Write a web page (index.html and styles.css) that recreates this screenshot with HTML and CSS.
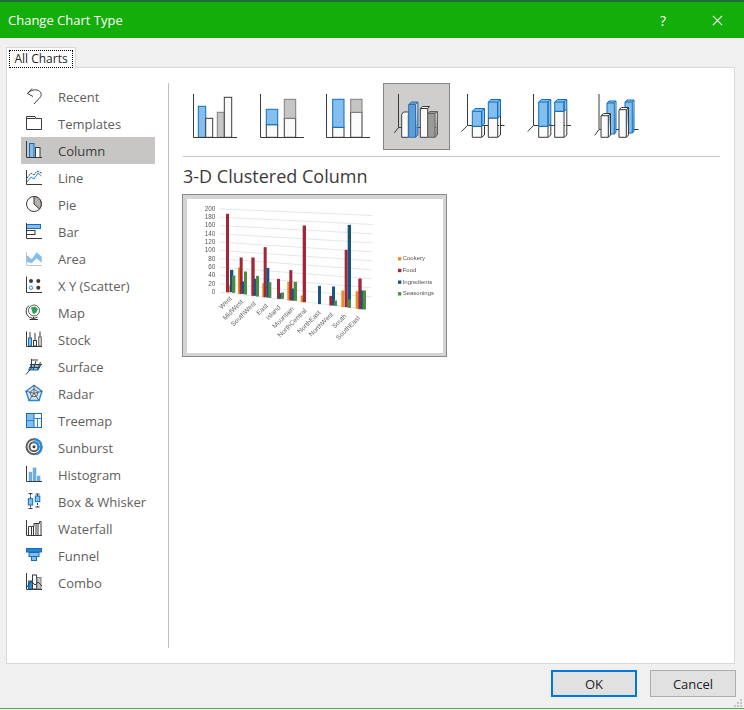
FILE: index.html
```html
<!DOCTYPE html>
<html lang="en">
<head>
<meta charset="utf-8">
<title>Change Chart Type</title>
<link rel="stylesheet" href="styles.css">
</head>
<body>
<header class="titlebar">
  <h1 class="title">Change Chart Type</h1>
  <div class="winbtns">
    <span class="help">?</span>
    <svg class="close" viewBox="0 0 12 12"><path d="M1 1L11 11M11 1L1 11"/></svg>
  </div>
</header>
<main class="main">
  <div class="tabs"><div class="tab"><span class="tablabel">All Charts</span></div></div>
  <section class="panel">
    <nav class="side">
      <div class="item"><svg class="ic" viewBox="0 0 20 21"><path class="ln" d="M7 2.500L2.500 7.500L8 10.500M2.500 7.500C6 4 10 3 13.500 4.500C17 6.500 17 10 14 12.500L9 18"/></svg><span>Recent</span></div>
      <div class="item"><svg class="ic" viewBox="0 0 20 21"><path class="ln" d="M1.500 16.500V3.500H10L11 5.500H16.500V16.500Z"/><path class="ln" d="M1.500 5.500H10.500"/></svg><span>Templates</span></div>
      <div class="item sel"><svg class="ic" viewBox="0 0 20 21"><rect class="b" x="4.500" y="3.500" width="4.500" height="14"/><rect class="w" x="10.500" y="7.500" width="4.500" height="10"/><path class="ln" d="M1.500 1V17.500H17"/></svg><span>Column</span></div>
      <div class="item"><svg class="ic" viewBox="0 0 20 21"><path class="bl" d="M2 15L6 10L9 12L13 6L16.500 9"/><path class="ln dash" d="M2 11L6 6L9 8L12 4L16.500 6"/><path class="ln" d="M1.500 3V17.500H17"/></svg><span>Line</span></div>
      <div class="item"><svg class="ic" viewBox="0 0 20 21"><circle class="w" cx="9" cy="10" r="7.500"/><path class="g2" d="M9 2.500A7.500 7.500 0 0 1 14.500 15L9 10Z"/></svg><span>Pie</span></div>
      <div class="item"><svg class="ic" viewBox="0 0 20 21"><rect class="b" x="1.500" y="3.500" width="14" height="4"/><rect class="w" x="1.500" y="9.500" width="8.500" height="4"/><path class="ln" d="M1.500 2V17.500H17"/></svg><span>Bar</span></div>
      <div class="item"><svg class="ic" viewBox="0 0 20 21"><path class="lg" d="M1.500 4V17.500H17"/><path class="af" d="M1.700 7L6.700 11.300L11.700 4.300L16.700 8.700V14.700L11.700 10.300L6.700 15.300L1.700 13.700Z"/></svg><span>Area</span></div>
      <div class="item"><svg class="ic" viewBox="0 0 20 21"><path class="ln" d="M1.500 1.500V17.500H17"/><circle class="dk" cx="6" cy="6" r="2"/><circle class="dk" cx="13.300" cy="6" r="2"/><circle class="dk" cx="13.300" cy="12.700" r="2"/><circle class="bl" cx="6" cy="12.700" r="1.700"/></svg><span>X Y (Scatter)</span></div>
      <div class="item"><svg class="ic" viewBox="0 0 20 21"><circle class="ring thinr" cx="9" cy="8.500" r="5.500"/><path class="gr" d="M6 5.500L10 4.500L13 7L11 11L8 12L7 9Z"/><path class="ln" d="M4 3.500A7 7 0 0 0 12.500 15M8.500 15V17.500M4.500 17.500H13"/></svg><span>Map</span></div>
      <div class="item"><svg class="ic" viewBox="0 0 20 21"><rect class="b" x="3.500" y="9" width="3" height="8"/><rect class="w" x="8.500" y="11.500" width="3" height="5.500"/><rect class="g" x="13.500" y="8" width="3" height="9"/><path class="ln" d="M5 3V9M10 4V11.500M15 2.500V8M1.500 2.500V17.500H17"/></svg><span>Stock</span></div>
      <div class="item"><svg class="ic" viewBox="0 0 20 21"><path class="b" d="M3.500 14L6.500 8.500H16L13 14Z"/><path class="ln" d="M6.500 3V12L1 18.500M5 8.500H17M4.500 11.500H15M8 14L11 5M12.500 14L15.500 6M6.500 4H13"/></svg><span>Surface</span></div>
      <div class="item"><svg class="ic" viewBox="0 0 20 21"><path class="bt" d="M9 2.300L17 8.200L14 17.500H4L1 8.200Z"/><path class="ln thin" d="M9 2.300V10.300M1 8.200L9 10.300L17 8.200M4 17.500L9 10.300L14 17.500M9 6L13 9L11.500 13.500H6.500L5 9Z"/></svg><span>Radar</span></div>
      <div class="item"><svg class="ic" viewBox="0 0 20 21"><rect class="w2" x="1.500" y="3.500" width="15" height="14"/><rect class="b" x="1.500" y="3.500" width="7.500" height="14"/><path class="bl" d="M1.500 10.500H9M9 8.500H16.500M12.500 8.500V17.500"/></svg><span>Treemap</span></div>
      <div class="item"><svg class="ic" viewBox="0 0 20 21"><circle class="ring" cx="9" cy="9.700" r="7.500"/><path class="arc" d="M9 2.200A7.500 7.500 0 0 1 16.500 9.700A7.500 7.500 0 0 1 11 17"/><circle class="ring" cx="9" cy="9.700" r="4.500"/><path class="arc" d="M9 5.200A4.500 4.500 0 0 1 13 12"/><circle class="dk" cx="9" cy="9.700" r="1.500"/></svg><span>Sunburst</span></div>
      <div class="item"><svg class="ic" viewBox="0 0 20 21"><rect class="b2" x="3.500" y="7.700" width="4" height="9.800"/><rect class="b2" x="7.500" y="3.300" width="4.200" height="14.200"/><rect class="b2" x="11.700" y="11.300" width="4" height="6.200"/><path class="ln" d="M1.500 2V17.500H17"/></svg><span>Histogram</span></div>
      <div class="item"><svg class="ic" viewBox="0 0 20 21"><path class="ln dash" d="M5.500 2.500V17.500M12.500 3V16"/><path class="ln" d="M3.500 2.500H7.500M3.500 17.500H7.500M10.500 3H14.500M10.500 16H14.500"/><rect class="b" x="3.300" y="7.700" width="4.400" height="6.300"/><rect class="b" x="10.300" y="5" width="4.500" height="5.700"/></svg><span>Box &amp; Whisker</span></div>
      <div class="item"><svg class="ic" viewBox="0 0 20 21"><path class="wf" d="M3.500 17.500V8.500H6.500V17.500M6.500 8.500H9V5.500H11V17.500M8.500 17.500V8.500M11 5.500H14.500V3.500H16V17.500M13 17.500V5.500"/><path class="ln" d="M1.500 2V17.500H17"/></svg><span>Waterfall</span></div>
      <div class="item"><svg class="ic" viewBox="0 0 20 21"><rect class="bs" x="1.500" y="3.500" width="15" height="3.500"/><rect class="b" x="4" y="7.500" width="10" height="4"/><rect class="b" x="6.500" y="11.500" width="5" height="4"/></svg><span>Funnel</span></div>
      <div class="item"><svg class="ic" viewBox="0 0 20 21"><rect class="bs" x="3.500" y="9" width="4" height="8"/><rect class="w" x="7.500" y="3" width="4" height="14"/><rect class="g" x="12" y="5.500" width="4" height="11.500"/><path class="ln" d="M1.500 1V17.500H17M2 15L6 9L10 13L13 10L17 14"/></svg><span>Combo</span></div>
    </nav>
    <div class="content">
      <div class="types">
        <div class="type"><svg class="tsvg" viewBox="0 0 67 67"><rect class="b" x="15.300" y="23.300" width="7.400" height="31"/><rect class="w" x="22.700" y="35.300" width="7" height="19"/><rect class="g" x="34.300" y="29.300" width="7" height="25"/><rect class="w" x="41.300" y="14.300" width="7.400" height="40"/><path class="ax" d="M10.500 11V54.500H54"/></svg></div>
        <div class="type"><svg class="tsvg" viewBox="0 0 67 67"><rect class="w" x="16.300" y="41.700" width="11.400" height="12.600"/><rect class="b" x="16.300" y="26.300" width="11.400" height="15.400"/><rect class="w" x="34.300" y="35.300" width="11.400" height="19"/><rect class="g" x="34.300" y="16.300" width="11.400" height="19"/><path class="ax" d="M10.500 11V54.500H54"/></svg></div>
        <div class="type"><svg class="tsvg" viewBox="0 0 67 67"><rect class="w" x="16.700" y="44.300" width="11.300" height="10"/><rect class="b" x="16.700" y="16.300" width="11.300" height="28"/><rect class="w" x="34.700" y="29.300" width="11.300" height="25"/><rect class="g" x="34.700" y="16.300" width="11.300" height="13"/><path class="ax" d="M10.500 11V54.500H54"/></svg></div>
        <div class="type on"><svg class="tsvg" viewBox="0 0 67 67"><path class="ax" d="M15.500 11V44.500L11.300 50M15.500 44.500H55"/>
          <path class="w" d="M18.700 31.500V54.300H25.300V31.500L27 29H20.500Z"/>
          <path class="bd" d="M25.700 21.500V54.300H32.500V21.500L35 19H28.500ZM32.500 21.500H25.700M32.500 54.300L35 52V19"/>
          <path class="w" d="M37.300 25.500V54.300H44.700V25.500L46.500 23.500H39.500ZM37.300 25.500H44.700"/>
          <path class="dg" d="M44.700 30.500V54.300H52V30.500L54.500 28.500H47ZM52 30.500H44.700M52 54.300L54.500 52V28.500"/></svg></div>
        <div class="type"><svg class="tsvg" viewBox="0 0 67 67"><path class="ax" d="M17.500 11V42.500L11.300 48.500M17.500 42.500H54.500"/>
          <path class="w" d="M22.300 43.300V54.300H31.700V43.300ZM31.700 54.300L34.500 52V43"/>
          <path class="b" d="M22.300 28.300V43.300H31.700V28.300L34.500 25.500H25ZM22.300 28.300H31.700V43.300L34.500 41V25.500"/>
          <path class="w" d="M38.300 35V54.300H47.700V35ZM47.700 54.300L50.500 52V33"/>
          <path class="b" d="M38.300 19V35H47.700V19L50.500 16.500H41ZM38.300 19H47.700V35L50.500 33V16.500"/></svg></div>
        <div class="type"><svg class="tsvg" viewBox="0 0 67 67"><path class="ax" d="M17.500 11V42.500L11.700 48.500M17.500 42.500H55"/>
          <path class="w" d="M22.700 43.300V54.300H32V43.300ZM32 54.300L34.800 52V41"/>
          <path class="b" d="M22.700 19V43.300H32V19L34.800 16.500H25.500ZM22.700 19H32V43.300L34.800 41V16.500"/>
          <path class="w" d="M38.700 28.300V54.300H48V28.300ZM48 54.300L50.800 52V26"/>
          <path class="b" d="M38.700 19V28.300H48V19L50.800 16.500H41.500ZM38.700 19H48V28.300L50.800 26V16.500"/></svg></div>
        <div class="type"><svg class="tsvg" viewBox="0 0 67 67"><path class="ax" d="M16 11V46.500L11.700 52.300M16 46.500H55.500"/>
          <path class="b" d="M24 20V51H31.300V20L33 18H26ZM24 20H31.300M31.300 51L33 49.500V18"/>
          <path class="b" d="M42 19V50H49.300V19L51 17H44ZM42 19H49.300M49.300 50L51 48.500V17"/>
          <path class="w" d="M18 32.700V54.300H25.300V32.700L27.500 30.500H20.500ZM18 32.700H25.300M25.300 54.300L27.500 52V30.500"/>
          <path class="w" d="M36 26.700V54.300H43.300V26.700L45.500 24.500H38.500ZM36 26.700H43.300M43.300 54.300L45.500 52V24.500"/></svg></div>
      </div>
      <h2 class="heading">3-D Clustered Column</h2>
      <div class="thumb">
        <svg class="chart" viewBox="2 -13 768 459">
          <g class="grid">
            <path d="M101 15L559 35M101 40L559 62M101 65L558 90M101 90L558 117M101 115L557 144M101 140L557 171M101 165L556 198M101 190L556 225M101 215L555 252M101 240L555 279M101 265L536 315"/>
          </g>
          <g class="ylab">
            <text x="87" y="21">200</text><text x="87" y="46">180</text><text x="87" y="71">160</text><text x="87" y="96">140</text><text x="87" y="121">120</text><text x="87" y="146">100</text><text x="87" y="171">80</text><text x="87" y="196">60</text><text x="87" y="221">40</text><text x="87" y="246">20</text><text x="87" y="271">0</text>
          </g>
          <g class="o"><rect x="122" y="245" width="9" height="21"/><rect x="155" y="191" width="9" height="79"/><rect x="228" y="238" width="9" height="42"/><rect x="303" y="234" width="9" height="55"/><rect x="343" y="275" width="9" height="20"/><rect x="465" y="260" width="9" height="50"/><rect x="508" y="262" width="9" height="53"/></g>
          <g class="r"><rect x="119" y="30" width="9" height="235"/><rect x="160" y="161" width="9" height="109"/><rect x="195" y="161" width="10" height="115"/><rect x="232" y="130" width="9" height="150"/><rect x="272" y="225" width="9" height="60"/><rect x="309" y="199" width="9" height="91"/><rect x="349" y="65" width="10" height="230"/><rect x="429" y="276" width="9" height="29"/><rect x="475" y="138" width="9" height="172"/><rect x="516" y="224" width="10" height="92"/></g>
          <g class="u"><rect x="131" y="198" width="10" height="67"/><rect x="166" y="233" width="9" height="37"/><rect x="203" y="225" width="8" height="51"/><rect x="240" y="192" width="9" height="89"/><rect x="278" y="268" width="8" height="17"/><rect x="316" y="254" width="8" height="36"/><rect x="395" y="246" width="9" height="55"/><rect x="437" y="248" width="9" height="57"/><rect x="484" y="63" width="10" height="248"/><rect x="523" y="260" width="8" height="56"/></g>
          <g class="e"><rect x="137" y="215" width="10" height="52"/><rect x="173" y="203" width="9" height="69"/><rect x="209" y="216" width="9" height="62"/><rect x="246" y="235" width="9" height="47"/><rect x="284" y="266" width="9" height="19"/><rect x="322" y="234" width="10" height="57"/><rect x="443" y="290" width="9" height="16"/><rect x="484" y="287" width="10" height="24"/><rect x="529" y="260" width="10" height="57"/></g>
          <g class="xlab">
            <text transform="translate(138 285) rotate(-45)">West</text>
            <text transform="translate(172 295) rotate(-45)">MidWest</text>
            <text transform="translate(210 300) rotate(-45)">SouthWest</text>
            <text transform="translate(246 307) rotate(-45)">East</text>
            <text transform="translate(284 312) rotate(-45)">Island</text>
            <text transform="translate(324 317) rotate(-45)">Mountain</text>
            <text transform="translate(362 322) rotate(-45)">NorthCentral</text>
            <text transform="translate(404 328) rotate(-45)">NorthEast</text>
            <text transform="translate(442 333) rotate(-45)">NorthWest</text>
            <text transform="translate(482 338) rotate(-45)">South</text>
            <text transform="translate(522 344) rotate(-45)">SouthEast</text>
          </g>
          <g class="legend">
            <rect class="ok" x="635" y="160" width="10" height="10"/><text x="649" y="170">Cookery</text>
            <rect class="rk" x="635" y="195" width="10" height="10"/><text x="649" y="205">Food</text>
            <rect class="uk" x="635" y="230" width="10" height="10"/><text x="649" y="240">Ingredients</text>
            <rect class="ek" x="635" y="265" width="10" height="10"/><text x="649" y="275">Seasonings</text>
          </g>
        </svg>
      </div>
    </div>
  </section>
</main>
<footer class="footer">
  <button class="btn primary">OK</button>
  <button class="btn">Cancel</button>
  <svg class="grip" viewBox="0 0 10 8"><path d="M7 0h2v2H7zM4 3h2v2H4zM7 3h2v2H7zM1 6h2v2H1zM4 6h2v2H4zM7 6h2v2H7z"/></svg>
</footer>
<div class="edge"></div>
</body>
</html>
```
FILE: styles.css
```css
* { box-sizing: border-box; }
html, body { margin: 0; padding: 0; width: 744px; height: 710px; overflow: hidden; }
body { display: flex; flex-direction: column; background: #f0f0f0; font-family: "Open Sans", "Noto Sans", sans-serif; color: #605e5c; position: relative; }

.titlebar { height: 38px; flex: none; background: #13ae0a; border-top: 2px solid #1d6b3c; display: flex; align-items: center; justify-content: space-between; padding: 0 21px 0 8px; }
.title { margin: 0; font-size: 13px; font-weight: 400; color: #fff; }
.winbtns { display: flex; align-items: center; gap: 46px; }
.help { color: #fff; font-size: 14px; }
.close { width: 11px; height: 11px; fill: none; stroke: #fff; stroke-width: 1.200; display: block; }

.main { flex: 1; min-height: 0; display: flex; flex-direction: column; padding: 9px 9px 0 6px; }
.tabs { display: flex; height: 21px; flex: none; position: relative; z-index: 1; margin-bottom: -1px; }
.tab { width: 70px; height: 22px; background: #fff; border: 1px solid #d9d9d9; border-bottom: 0; padding: 2px 2px 0; }
.tablabel { display: block; border: 1px dotted #000; height: 18px; font-size: 12px; line-height: 16px; text-align: center; color: #222; white-space: nowrap; }

.panel { flex: 1; min-height: 0; background: #fff; border: 1px solid #d9d9d9; display: flex; padding: 15px 0 15px 14px; }
.side { width: 147px; flex: none; }
.item { width: 134px; height: 27px; display: flex; align-items: center; font-size: 13px; }
.item.sel { background: #c8c6c4; color: #3b3a39; }
.ic { width: 20px; height: 21px; margin-left: 4px; margin-right: 13px; flex: none; }

.content { flex: 1; min-width: 0; border-left: 1px solid #bdbdbd; padding-left: 14px; padding-right: 14px; }
.types { display: flex; height: 67px; }
.type { width: 66.670px; height: 67px; flex: none; }
.type.on { background: #d0cecd; outline: 1.500px solid #858585; outline-offset: -1.500px; }
.tsvg { display: block; width: 67px; height: 67px; }
.heading { margin: 6px 0 0 0; padding-top: 6px; border-top: 1px solid #c8c8c8; font-size: 18px; line-height: 26px; font-weight: 400; color: #3b3a39; }
.thumb { margin: 5px 0 0 -1px; width: 265px; height: 163px; border: 1.500px solid #8a8a8a; background: #d4d4d4; padding: 3.500px; }
.chart { display: block; width: 100%; height: 100%; background: #fff; filter: blur(0.250px); }

.ln { fill: none; stroke: #3b3a39; stroke-width: 1; }
.ln.thin { stroke-width: 0.700; }
.ln.dash { stroke-dasharray: 2 1; }
.lg { fill: none; stroke: #c8c6c4; stroke-width: 1; }
.b { fill: #83beec; stroke: #106ebe; stroke-width: 1; }
.b2 { fill: #6aade4; stroke: #fff; stroke-width: 0.500; }
.bs { fill: #2c86d1; stroke: #106ebe; stroke-width: 1; }
.bl { fill: none; stroke: #2b88d8; stroke-width: 1; }
.bt { fill: #cfe4f6; stroke: #2b88d8; stroke-width: 1.400; }
.w { fill: #fafafa; stroke: #3b3a39; stroke-width: 1; }
.w2 { fill: #fff; stroke: #106ebe; stroke-width: 1; }
.g { fill: #c6c5c3; stroke: #7f7f7f; stroke-width: 1; }
.g2 { fill: #b3b0ad; stroke: #3b3a39; stroke-width: 1; }
.dk { fill: #3b3a39; }
.af { fill: #83beec; }
.gr { fill: #2e9e5b; }
.ring { fill: none; stroke: #605e5c; stroke-width: 2; }
.ring.thinr { stroke-width: 1; }
.arc { fill: none; stroke: #2b88d8; stroke-width: 2.200; }
.wf { fill: none; stroke: #3b3a39; stroke-width: 1; }
.ax { fill: none; stroke: #3b3a39; stroke-width: 1; }
.bd { fill: #5f9fd8; stroke: #2f6eb5; stroke-width: 1; }
.dg { fill: #9a9a98; stroke: #5f5f5e; stroke-width: 1; }

.grid path { fill: none; stroke: #d9d9d9; stroke-width: 2; }
.ylab text { font-size: 19px; fill: #555; text-anchor: end; font-family: "Liberation Sans", sans-serif; }
.xlab text { font-size: 20px; fill: #666; text-anchor: end; font-family: "Liberation Sans", sans-serif; }
.legend text { font-size: 18px; fill: #555; font-family: "Liberation Sans", sans-serif; }
.o rect, .ok { fill: #ed8a1f; }
.r rect, .rk { fill: #a32638; }
.u rect, .uk { fill: #17557f; }
.e rect, .ek { fill: #4d8a46; }

.footer { height: 44px; flex: none; display: flex; justify-content: flex-end; align-items: flex-start; gap: 13px; padding: 6px 8px 0 0; position: relative; }
.btn { width: 86px; height: 27px; background: #e1e1e1; border: 1px solid #adadad; font-family: inherit; font-size: 13px; color: #222; padding: 0; }
.btn.primary { border: 2px solid #0078d7; }
.grip { position: absolute; right: 1px; bottom: 1px; width: 10px; height: 8px; fill: #c4c4c4; }
.edge { height: 2px; flex: none; border-top: 1px solid #4caf50; }
```
